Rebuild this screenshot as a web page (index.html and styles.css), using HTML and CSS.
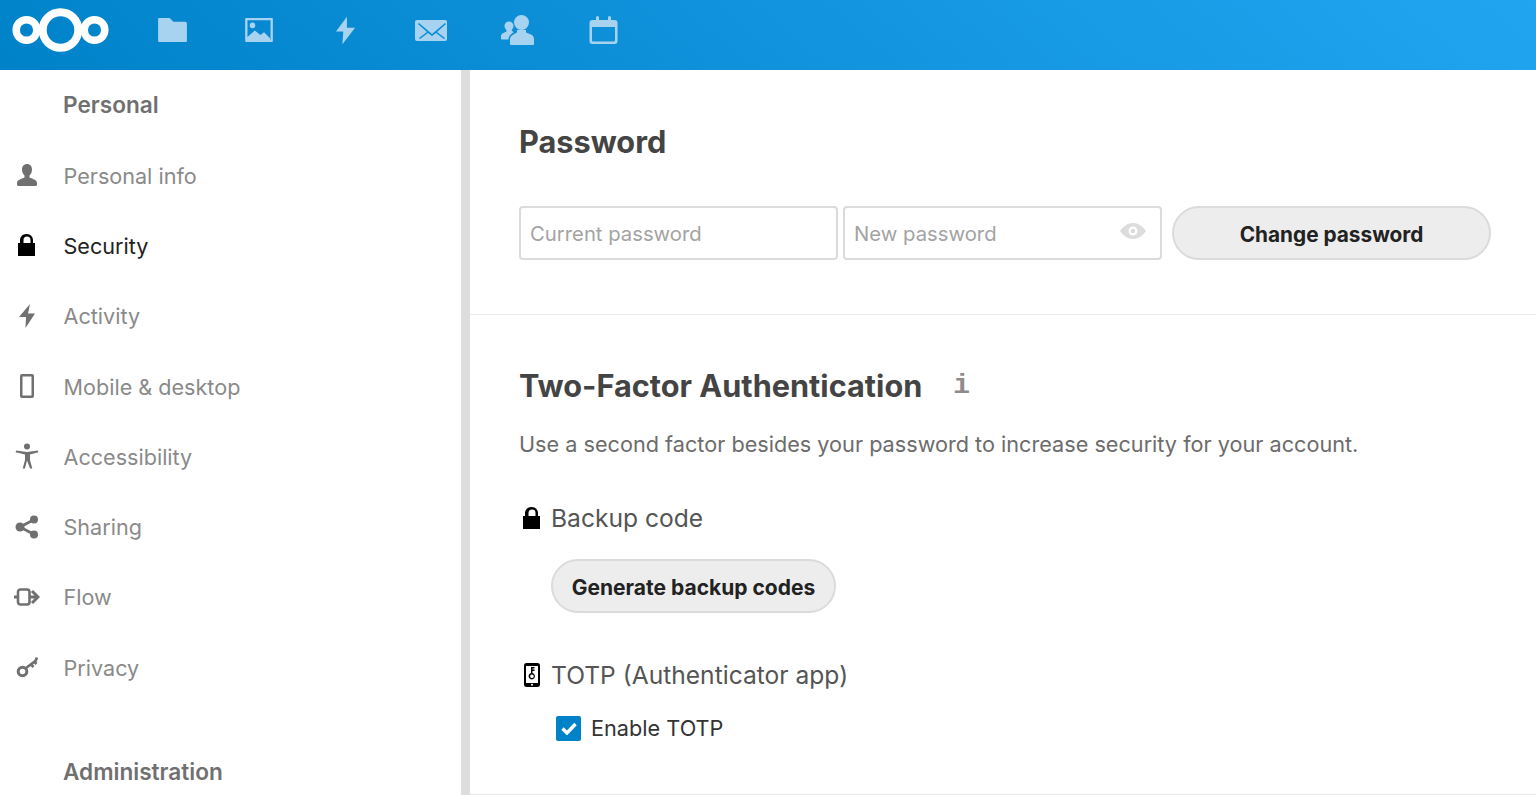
FILE: index.html
```html
<!doctype html>
<html lang="en">

<head>
    <meta charset="UTF-8">
    <meta name="viewport" content="width=device-width, initial-scale=1.0">
    <title>Security - Settings</title>
    <link rel="stylesheet" href="styles.css">
</head>

<body>
    <header class="topbar">
        <a href="#" class="logo">
            <svg width="97" height="44" viewBox="0 0 97 44">
                <circle cx="48.500" cy="22" r="17.800" fill="none" stroke="#fff" stroke-width="8" />
                <circle cx="14.500" cy="22" r="10.300" fill="none" stroke="#fff" stroke-width="7.500" />
                <circle cx="82.500" cy="22" r="10.300" fill="none" stroke="#fff" stroke-width="7.500" />
            </svg>
        </a>
        <nav class="app-menu">
            <a href="#" class="app-icon">
                <svg width="29" height="24" viewBox="0 0 30 25">
                    <path d="M2 0h10l4 4h12a2 2 0 0 1 2 2v18a1 1 0 0 1-1 1H1a1 1 0 0 1-1-1V1a1 1 0 0 1 1-1z" />
                </svg>
            </a>
            <a href="#" class="app-icon nudge">
                <svg width="28" height="24" viewBox="0 0 30 26">
                    <path fill-rule="evenodd" d="M1 0h28a1 1 0 0 1 1 1v24a1 1 0 0 1-1 1H1a1 1 0 0 1-1-1V1a1 1 0 0 1 1-1zm1.500 2.500v21h25V2.500zM8 5a3 3 0 1 1 0 6 3 3 0 0 1 0-6zM2.500 23.500v-3l8-7 6 5 4-3 6.500 6.500v1.500z" />
                </svg>
            </a>
            <a href="#" class="app-icon nudge-more">
                <svg width="20" height="29" viewBox="0 0 22 30">
                    <path d="M12 0 0 16h8l-1 14 14-18h-9z" />
                </svg>
            </a>
            <a href="#" class="app-icon">
                <svg width="32" height="21" viewBox="0 0 32 21">
                    <path fill-rule="evenodd" d="M2 0h28a2 2 0 0 1 2 2v17a2 2 0 0 1-2 2H2a2 2 0 0 1-2-2V2a2 2 0 0 1 2-2zm2 3-1 1 9 8-8 6 1 1 8-6 4 3 4-3 8 6 1-1-8-6 9-8-1-1-13 11z" />
                </svg>
            </a>
            <a href="#" class="app-icon nudge">
                <svg width="33" height="30" viewBox="0 0 33 30">
                    <circle cx="20.500" cy="7.500" r="7.500" />
                    <circle cx="8" cy="11" r="4.500" />
                    <path d="M16 15h9v2.500c3 1.200 8 2 8 6.500v5a1 1 0 0 1-1 1H10a1 1 0 0 1-1-1v-5c0-3.500 5-5.300 7-6.500z" />
                    <path d="M5.500 15h5l2 2.500C10 19 7.500 21 7.500 24.500H1a1 1 0 0 1-1-1V21c0-2.500 3.500-3.500 5.500-4.500z" />
                </svg>
            </a>
            <a href="#" class="app-icon">
                <svg width="29" height="28" viewBox="0 0 28 28">
                    <path fill-rule="evenodd" d="M8 0a1.500 1.500 0 0 1 1.500 1.500V4h9V1.500a1.500 1.500 0 0 1 3 0V4H25a3 3 0 0 1 3 3v18a3 3 0 0 1-3 3H3a3 3 0 0 1-3-3V7a3 3 0 0 1 3-3h3.500V1.500A1.500 1.500 0 0 1 8 0zM2.500 11v13.500a1 1 0 0 0 1 1h21a1 1 0 0 0 1-1V11z" />
                </svg>
            </a>
        </nav>
    </header>

    <div class="layout">
        <aside class="sidebar">
            <div class="caption">Personal</div>
            <a href="#" class="nav-item">
                <svg width="22" height="22" viewBox="0 0 22 22">
                    <path d="M11 0c3 0 5 2.300 5 5.500 0 2.500-1 4.500-2.500 6v2c2 1.200 7.500 2 7.500 5.500v1.500a1.500 1.500 0 0 1-1.500 1.500h-17A1.500 1.500 0 0 1 1 20.500V19c0-3.500 5.500-4.300 7.500-5.500v-2C7 10 6 8 6 5.500 6 2.300 8 0 11 0z" />
                </svg>
                <span>Personal info</span>
            </a>
            <a href="#" class="nav-item active">
                <svg width="22" height="22" viewBox="0 0 22 22">
                    <path fill-rule="evenodd" d="M11 0a6 6 0 0 1 6 6v3h2v13H2V9h2V6a6 6 0 0 1 6-6zm0 2.500A3.500 3.500 0 0 0 7.500 6v3h7V6A3.500 3.500 0 0 0 11 2.500z" />
                </svg>
                <span>Security</span>
            </a>
            <a href="#" class="nav-item">
                <svg width="22" height="24" viewBox="0 0 22 24">
                    <path d="M14 0 3 13h7l-.5 11L19 9.500h-7z" />
                </svg>
                <span>Activity</span>
            </a>
            <a href="#" class="nav-item">
                <svg width="22" height="24" viewBox="0 0 22 24">
                    <path fill-rule="evenodd" d="M6 0h10a2 2 0 0 1 2 2v20a2 2 0 0 1-2 2H6a2 2 0 0 1-2-2V2a2 2 0 0 1 2-2zm.500 2.500v19h9v-19z" />
                </svg>
                <span>Mobile &amp; desktop</span>
            </a>
            <a href="#" class="nav-item">
                <svg width="24" height="26" viewBox="0 0 24 26">
                    <circle cx="12" cy="3.500" r="3" />
                    <path d="M1 7.500 12 9l11-1.500.3 1.800-8.300 2.200V17l2.300 8.500h-2.200L12 17.500 9.900 25.500H7.700L10 17v-5.500L.7 9.300z" />
                </svg>
                <span>Accessibility</span>
            </a>
            <a href="#" class="nav-item">
                <svg width="24" height="24" viewBox="0 0 24 24">
                    <circle cx="19" cy="4.500" r="4" />
                    <circle cx="19" cy="19.500" r="4" />
                    <circle cx="5" cy="12" r="4.500" />
                    <path d="M5 10.500 18 3.500l1.500 2.500L8 12l11.500 6-1.500 2.500L5 13.500z" />
                </svg>
                <span>Sharing</span>
            </a>
            <a href="#" class="nav-item">
                <svg width="26" height="22" viewBox="0 0 26 22" fill="none" stroke="currentColor">
                    <rect x="4" y="3.500" width="11.500" height="15" rx="2.500" stroke-width="2.600" />
                    <path d="M0 11h4M15 11h8M18 5l6 6-6 6" stroke-width="3" />
                </svg>
                <span>Flow</span>
            </a>
            <a href="#" class="nav-item">
                <svg width="24" height="24" viewBox="0 0 24 24" fill="none" stroke="currentColor">
                    <circle cx="7.500" cy="16.500" r="4.300" stroke-width="3" />
                    <path d="M11 13 21 5.500M16 9.500l2.500 2.500M19.500 7l2 2M20.500 6l1.500-3.500" stroke-width="2.800" />
                </svg>
                <span>Privacy</span>
            </a>
            <div class="caption caption-admin">Administration</div>
        </aside>

        <main class="content">
            <section class="section password-section">
                <h2>Password</h2>
                <form class="password-form">
                    <input type="password" class="field" placeholder="Current password">
                    <div class="field-wrap">
                        <input type="password" class="field" placeholder="New password">
                        <svg class="eye" width="26" height="16" viewBox="0 0 26 16">
                            <path fill-rule="evenodd" d="M13 0c6 0 10.500 4.500 13 8-2.500 3.500-7 8-13 8S2.500 11.500 0 8c2.500-3.500 7-8 13-8zm0 3.500a4.500 4.500 0 1 0 0 9 4.500 4.500 0 0 0 0-9zm0 2.300a2.200 2.200 0 1 1 0 4.400 2.200 2.200 0 0 1 0-4.400z" />
                        </svg>
                    </div>
                    <button type="button" class="btn btn-change">Change password</button>
                </form>
            </section>

            <section class="section tfa-section">
                <div class="tfa-title">
                    <h2>Two-Factor Authentication</h2>
                    <a href="#" class="info-link">i</a>
                </div>
                <p class="tfa-desc">Use a second factor besides your password to increase security for your account.</p>

                <h3 class="provider">
                    <svg width="22" height="22" viewBox="0 0 22 22">
                        <path fill-rule="evenodd" d="M11 0a6 6 0 0 1 6 6v3h2v13H2V9h2V6a6 6 0 0 1 6-6zm0 2.500A3.500 3.500 0 0 0 7.500 6v3h7V6A3.500 3.500 0 0 0 11 2.500z" />
                    </svg>
                    Backup code
                </h3>
                <button type="button" class="btn btn-backup">Generate backup codes</button>

                <h3 class="provider provider-totp">
                    <svg width="22" height="24" viewBox="0 0 22 24">
                        <path fill-rule="evenodd" d="M5.500 0h11A2.500 2.500 0 0 1 19 2.500v19a2.500 2.500 0 0 1-2.500 2.500h-11A2.500 2.500 0 0 1 3 21.500v-19A2.500 2.500 0 0 1 5.500 0zM5 3v17h12V3zm5 1h3.500v1.500H11.500v1h2V8h-2v2.100a3.200 3.200 0 1 1-1.500 0zm.8 7.400a1.800 1.800 0 1 0 .4 3.600 1.800 1.800 0 0 0-.4-3.600zM11 20.800a1 1 0 1 0 0 2 1 1 0 0 0 0-2z" />
                    </svg>
                    TOTP (Authenticator app)
                </h3>
                <label class="check-row">
                    <span class="checkbox">
                        <svg width="16" height="13" viewBox="0 0 16 13" fill="none" stroke="#fff" stroke-width="3.400">
                            <path d="M1.500 6.500 6 11l8.500-9" />
                        </svg>
                    </span>
                    Enable TOTP
                </label>
            </section>
        </main>
    </div>
</body>

</html>
```

FILE: styles.css
```css
* {
    box-sizing: border-box;
}

body {
    margin: 0;
    height: 795px;
    overflow: hidden;
    background: #fff;
    font-family: 'Inter', 'Liberation Sans', sans-serif;
    color: #222;
}

a {
    text-decoration: none;
    color: inherit;
}

.topbar {
    height: 70px;
    padding-bottom: 10px;
    background: linear-gradient(40deg, #0082c9 0%, #22a5f0 100%);
    display: flex;
    align-items: center;
}

.logo {
    display: flex;
    margin-left: 12px;
}

.app-menu {
    display: flex;
    margin-left: 20px;
}

.app-icon {
    width: 86.2px;
    height: 60px;
    display: flex;
    align-items: center;
    justify-content: center;
    fill: #a8d3f0;
}

.app-icon.nudge {
    padding-left: 2px;
}

.app-icon.nudge-more {
    padding-left: 4px;
}

.layout {
    display: flex;
    height: 725px;
}

.sidebar {
    width: 470px;
    flex: none;
    border-right: 9px solid #ddd;
}

.caption {
    height: 70px;
    padding-left: 63px;
    padding-bottom: 2px;
    display: flex;
    align-items: center;
    font-size: 22.6px;
    font-weight: 600;
    color: #707070;
}

.caption-admin {
    margin-top: 35px;
}

.nav-item {
    height: 70.3px;
    display: flex;
    align-items: center;
    font-size: 21.6px;
    color: #8a8a8a;
    fill: #707070;
    stroke: none;
}

.nav-item span {
    margin-top: 1px;
}

.nav-item svg {
    width: 26px;
    margin-left: 14px;
    margin-right: 23.500px;
    flex: none;
    color: #707070;
}

.nav-item.active {
    color: #222;
    fill: #000;
}

.content {
    flex: 1;
}

.section {
    border-bottom: 1px solid #e8e8e8;
    padding-left: 49px;
}

.section h2 {
    margin: 0;
    font-size: 30.700px;
    font-weight: 700;
    color: #444;
}

.password-section {
    height: 245px;
    padding-top: 53px;
}

.password-form {
    display: flex;
    margin-top: 46px;
}

.field-wrap {
    position: relative;
    margin-left: 5px;
}

.field {
    width: 319px;
    height: 54px;
    border: 2px solid #dbdbdb;
    border-radius: 4px;
    padding: 1px 9px 0;
    font: 20.300px 'Inter', 'Liberation Sans', sans-serif;
    background: #fff;
}

.field::placeholder {
    color: #a3a3a3;
    opacity: 1;
}

.eye {
    position: absolute;
    right: 16px;
    top: 17px;
    fill: #dcdcdc;
}

.btn {
    height: 54px;
    padding: 2px 0 0;
    border: 2px solid #dbdbdb;
    border-radius: 27px;
    background: #ededed;
    color: #222;
    font: 700 21px 'Inter', 'Liberation Sans', sans-serif;
}

.btn-change {
    width: 319px;
    margin-left: 10px;
    font-size: 20.800px;
}

.tfa-section {
    height: 480px;
    padding-top: 52px;
}

.tfa-title {
    display: flex;
    align-items: center;
}

.info-link {
    margin-left: 31px;
    font-family: 'Liberation Mono', monospace;
    font-size: 28px;
    font-weight: 700;
    color: #8c8c8c;
}

.tfa-desc {
    margin: 27px 0 0;
    font-size: 21.660px;
    color: #6c6c6c;
}

.provider {
    margin: 46px 0 0;
    display: flex;
    align-items: center;
    gap: 8px;
    font-size: 24.600px;
    font-weight: 400;
    color: #555;
}

.provider svg {
    margin-left: 2px;
    fill: #000;
    flex: none;
}

.btn-backup {
    display: block;
    width: 285px;
    margin: 26px 0 0 32px;
}

.provider-totp {
    margin-top: 47px;
}

.check-row {
    display: flex;
    align-items: center;
    gap: 10px;
    margin: 25px 0 0 37px;
    font-size: 21.700px;
    color: #333;
}

.checkbox {
    width: 25px;
    height: 25px;
    border-radius: 2px;
    background: #0082c9;
    display: flex;
    align-items: center;
    justify-content: center;
}
```
